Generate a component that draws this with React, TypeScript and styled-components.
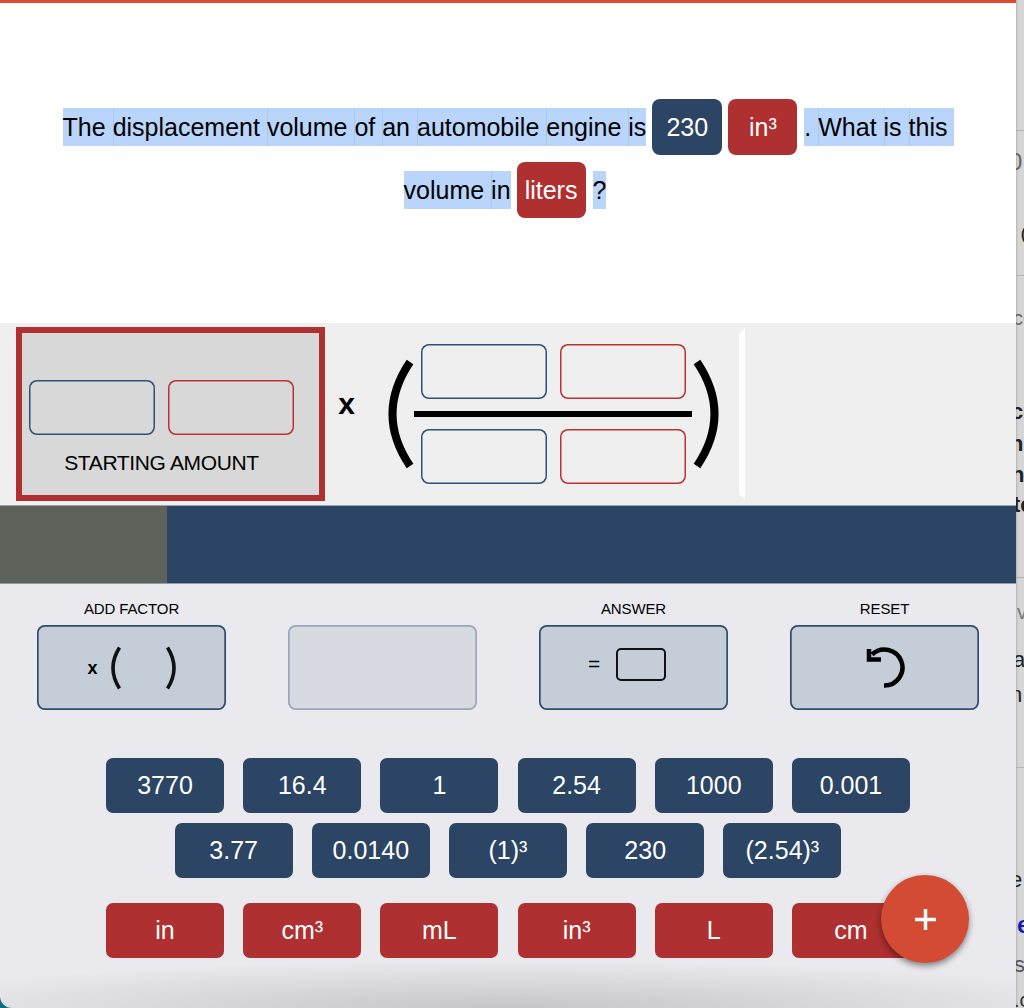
import React from "react";
import styled, { createGlobalStyle } from "styled-components";

const Global = createGlobalStyle`
  html, body { margin: 0; padding: 0; height: 1008px; overflow: hidden; background: #d6d6d6; }
  * { box-sizing: border-box; }
  body { font-family: "Liberation Sans", Arial, sans-serif; color: #000; }
`;

const NAVY = "#2c4564";
const RED = "#ae3030";

const Page = styled.div`
  display: flex;
  width: 1024px;
  height: 1008px;
  overflow: hidden;
`;
const Main = styled.main`
  width: 1016px;
  height: 1008px;
  display: flex;
  flex-direction: column;
  background: #0e6a82;
`;
const TopBar = styled.div`
  height: 3px;
  background: #dd4a30;
  flex: none;
`;
const Question = styled.section`
  height: 320px;
  flex: none;
  background: #fff;
  padding-top: 96px;
  display: flex;
  flex-direction: column;
  gap: 7px;
`;
const QLine = styled.div<{ $left?: number; $right?: number }>`
  display: flex;
  justify-content: center;
  align-items: center;
  height: 56px;
  font-size: 25px;
  padding: 0 ${(p) => p.$right ?? 0}px 0 ${(p) => p.$left ?? 0}px;
`;
const Words = styled.span`
  display: flex;
  height: 38px;
  line-height: 38px;
  background: #b9d5fb;
  white-space: pre;
`;
const Word = styled.span`
  box-shadow: inset 1px 0 0 #a5c8f8;
  &:first-child { box-shadow: none; }
`;
const Chip = styled.span<{ $tone: string; $w: number; $before: number; $after: number }>`
  width: ${(p) => p.$w}px;
  height: 56px;
  margin: 0 ${(p) => p.$after}px 0 ${(p) => p.$before}px;
  border-radius: 8px;
  display: flex;
  align-items: center;
  justify-content: center;
  color: #fff;
  background: ${(p) => p.$tone};
`;

const Workspace = styled.section`
  height: 182px;
  flex: none;
  background: #efefef;
  padding: 4px 0 0 16px;
  display: flex;
  align-items: flex-start;
`;
const StartBox = styled.div`
  width: 309px;
  height: 174px;
  border: 6px solid ${RED};
  background: #d8d8d8;
  padding: 47px 0 0 7px;
  flex: none;
`;
const SlotPair = styled.div`
  display: flex;
  gap: 13px;
`;
const Slot = styled.div<{ $tone: string }>`
  width: 126px;
  height: 55px;
  box-shadow: inset 0 0 0 1.5px ${(p) => p.$tone};
  border-radius: 8px;
`;
const StartLabel = styled.div`
  width: 265px;
  margin-top: 17px;
  text-align: center;
  font-size: 21px;
  line-height: 22px;
  letter-spacing: -0.35px;
`;
const Times = styled.div`
  margin: 59px 33px 0 13px;
  width: 17px;
  font-size: 30px;
  font-weight: 700;
  line-height: 36px;
  text-align: center;
`;
const FactorGroup = styled.div`
  display: flex;
  align-items: center;
  margin-top: 17px;
  flex: none;
`;
const Fraction = styled.div`
  width: 278px;
  display: flex;
  flex-direction: column;
  align-items: center;
  gap: 12px;
`;
const FractionBar = styled.div`
  width: 100%;
  height: 6px;
  background: #000;
`;
const Divider = styled.div`
  width: 6px;
  height: 172px;
  margin: 1px 0 0 20px;
  background: #fff;
  clip-path: polygon(0 6px, 100% 0, 100% 100%, 0 calc(100% - 6px));
`;

const Progress = styled.div`
  height: 79px;
  flex: none;
  background: ${NAVY};
  box-shadow: inset 0 1px 0 #9aa3ad, inset 0 -1px 0 #8e9bab;
`;
const ProgressFill = styled.div`
  height: 100%;
  background: #5d635b;
  box-shadow: inset 0 1px 0 #9aa3ad, inset 0 -1px 0 #8e9bab;
`;

const Panel = styled.section`
  flex: 1;
  background:
    radial-gradient(ellipse 640px 48px at 50% 100%, rgba(120, 120, 125, 0.32), rgba(120, 120, 125, 0) 100%),
    #e9e9ee;
  border-bottom-left-radius: 12px;
  padding-top: 15px;
  position: relative;
`;
const Actions = styled.div`
  display: grid;
  grid-template-columns: repeat(4, 189px);
  column-gap: 62px;
  padding-left: 37px;
`;
const Action = styled.div`
  display: flex;
  flex-direction: column;
  align-items: center;
  gap: 10px;
`;
const ActionLabel = styled.div`
  height: 16px;
  line-height: 19px;
  font-size: 15px;
  letter-spacing: -0.12px;
`;
const ActionButton = styled.button<{ $disabled?: boolean }>`
  width: 100%;
  height: 85px;
  margin-top: ${(p) => (p.$disabled ? "26px" : "0")};
  padding: 0;
  border-radius: 8px;
  border: none;
  box-shadow: inset 0 0 0 1.7px ${(p) => (p.$disabled ? "#9aa7ba" : "#2f4d70")};
  background: ${(p) => (p.$disabled ? "#d7dbe1" : "#c5ced8")};
  display: flex;
  align-items: center;
  justify-content: center;
  font-family: inherit;
  color: #000;
`;
const AddFactorMark = styled.span`
  width: 10px;
  font-size: 18px;
  font-weight: 700;
  line-height: 18px;
  margin-right: 13px;
  text-align: center;
`;
const AddFactorGap = styled.span`
  width: 45px;
`;
const AnswerGroup = styled.span`
  display: flex;
  align-items: center;
  gap: 16px;
  padding: 0 13px 6px 0;
`;
const Equals = styled.span`
  font-size: 21px;
  line-height: 21px;
  width: 12px;
  text-align: center;
  margin-bottom: 2px;
`;
const AnswerBox = styled.span`
  width: 50px;
  height: 33px;
  border: 2px solid #111;
  border-radius: 5px;
`;

const Tokens = styled.div`
  display: flex;
  flex-direction: column;
  align-items: center;
  margin-top: 48px;
`;
const TokenRow = styled.div<{ $top?: number }>`
  display: flex;
  gap: 19.2px;
  margin-top: ${(p) => p.$top ?? 0}px;
`;
const Token = styled.button<{ $tone: string }>`
  width: 118px;
  height: 55px;
  padding: 0;
  border: none;
  border-radius: 7px;
  background: ${(p) => p.$tone};
  color: #fff;
  font-family: inherit;
  font-size: 25px;
`;
const Fab = styled.button`
  position: absolute;
  left: 881px;
  top: 291px;
  width: 88px;
  height: 88px;
  border: none;
  border-radius: 50%;
  background: #d34b33;
  box-shadow: 0 3px 6px rgba(0, 0, 0, 0.45);
  display: flex;
  align-items: center;
  justify-content: center;
  padding: 0;
`;

const BackStrip = styled.aside`
  width: 8px;
  height: 1008px;
  flex: none;
  background: #d6d6d6;
  box-shadow: inset 2px 0 2px -1px #b4b4b4;
  overflow: hidden;
`;
const BackRow = styled.div<{ $h: number; $rule?: boolean; $color?: string; $bold?: boolean; $size?: number }>`
  height: ${(p) => p.$h}px;
  line-height: ${(p) => p.$h}px;
  border-bottom: ${(p) => (p.$rule ? "1px solid #b2b2b2" : "none")};
  color: ${(p) => p.$color ?? "#222"};
  font-weight: ${(p) => (p.$bold ? 700 : 400)};
  font-size: ${(p) => p.$size ?? 20}px;
  white-space: nowrap;
  overflow: hidden;
`;
const BackText = styled.span<{ $shift?: number }>`
  display: inline-block;
  margin-left: ${(p) => p.$shift ?? 0}px;
`;

const BigParen = ({ flip }: { flip?: boolean }) => (
  <svg width="26" height="110" viewBox="0 0 26 110" style={flip ? { transform: "scaleX(-1)", marginLeft: 1 } : undefined}>
    <path d="M22 3Q-13 55 22 107" fill="none" stroke="#000" strokeWidth="8" />
  </svg>
);
const SmallParen = ({ flip }: { flip?: boolean }) => (
  <svg width="10" height="44" viewBox="0 0 10 44" style={flip ? { transform: "scaleX(-1)" } : undefined}>
    <path d="M8.5 1.5Q-4.5 22 8.5 42.5" fill="none" stroke="#111" strokeWidth="3.6" />
  </svg>
);
const ResetIcon = () => (
  <svg width="42" height="44" viewBox="0 0 42 44">
    <path d="M8 8.5A18 18 0 1 1 20 39.5" fill="none" stroke="#000" strokeWidth="4.5" />
    <path d="M5 3V13.5H17" fill="none" stroke="#000" strokeWidth="4.5" />
  </svg>
);
const PlusIcon = () => (
  <svg width="21" height="21" viewBox="0 0 21 21">
    <path d="M10.5 0V21M0 10.5H21" stroke="#fff" strokeWidth="3.5" />
  </svg>
);

const line1 = ["The ", "displacement ", "volume ", "of ", "an ", "automobile ", "engine ", "is"];
const line1b = [". ", "What ", "is ", "this "];
const row1 = ["3770", "16.4", "1", "2.54", "1000", "0.001"];
const row2 = ["3.77", "0.0140", "(1)³", "230", "(2.54)³"];
const row3 = ["in", "cm³", "mL", "in³", "L", "cm"];

type Back = { h: number; t?: string; rule?: boolean; color?: string; bold?: boolean; shift?: number; size?: number };
const backRows: Back[] = [
  { h: 131, rule: true },
  { h: 62, t: "0", color: "#666", shift: -7, size: 24 },
  { h: 82, t: "(", color: "#222", shift: 5, bold: true, size: 14 },
  { h: 1, rule: true },
  { h: 84, t: "co", color: "#666", shift: -3 },
  { h: 36 },
  { h: 32, t: "ce", bold: true, shift: -5, size: 22 },
  { h: 32, t: "he", bold: true, shift: -6, size: 22 },
  { h: 30, t: "h", bold: true, shift: -5, size: 22 },
  { h: 30, t: "te", bold: true, shift: -3, size: 22 },
  { h: 58, rule: true },
  { h: 68, t: "v", color: "#777", shift: 1 },
  { h: 28, t: "ad", shift: -3, size: 22 },
  { h: 42, t: "n", shift: -6, size: 22 },
  { h: 52, rule: true },
  { h: 92 },
  { h: 40, t: "e", shift: -6, size: 22 },
  { h: 50, t: "e", color: "#1a1aa8", bold: true, shift: 1, size: 24 },
  { h: 30, t: "s", color: "#555", shift: -2, size: 22 },
  { h: 40, t: ".c", color: "#333", shift: -2 },
];

export default function App() {
  return (
    <Page>
      <Global />
      <Main>
        <TopBar />
        <Question>
          <QLine $left={1}>
            <Words>
              {line1.map((w, i) => (
                <Word key={i}>{w}</Word>
              ))}
            </Words>
            <Chip $tone={NAVY} $w={70} $before={6} $after={6}>230</Chip>
            <Chip $tone={RED} $w={69} $before={0} $after={7}>in³</Chip>
            <Words>
              {line1b.map((w, i) => (
                <Word key={i}>{w}</Word>
              ))}
            </Words>
          </QLine>
          <QLine $right={6}>
            <Words>
              <Word>volume </Word>
              <Word>in</Word>
            </Words>
            <Chip $tone={RED} $w={69} $before={6} $after={7}>liters</Chip>
            <Words>
              <Word>?</Word>
            </Words>
          </QLine>
        </Question>
        <Workspace>
          <StartBox>
            <SlotPair>
              <Slot $tone="#2f5078" />
              <Slot $tone="#bb3232" />
            </SlotPair>
            <StartLabel>STARTING AMOUNT</StartLabel>
          </StartBox>
          <Times>x</Times>
          <FactorGroup>
            <BigParen />
            <Fraction>
              <SlotPair>
                <Slot $tone="#2f5078" />
                <Slot $tone="#bb3232" />
              </SlotPair>
              <FractionBar />
              <SlotPair>
                <Slot $tone="#2f5078" />
                <Slot $tone="#bb3232" />
              </SlotPair>
            </Fraction>
            <BigParen flip />
          </FactorGroup>
          <Divider />
        </Workspace>
        <Progress>
          <ProgressFill style={{ width: 167 }} />
        </Progress>
        <Panel>
          <Actions>
            <Action>
              <ActionLabel>ADD FACTOR</ActionLabel>
              <ActionButton>
                <AddFactorMark>x</AddFactorMark>
                <SmallParen />
                <AddFactorGap />
                <SmallParen flip />
              </ActionButton>
            </Action>
            <Action>
              <ActionButton $disabled />
            </Action>
            <Action>
              <ActionLabel>ANSWER</ActionLabel>
              <ActionButton>
                <AnswerGroup>
                  <Equals>=</Equals>
                  <AnswerBox />
                </AnswerGroup>
              </ActionButton>
            </Action>
            <Action>
              <ActionLabel>RESET</ActionLabel>
              <ActionButton>
                <ResetIcon />
              </ActionButton>
            </Action>
          </Actions>
          <Tokens>
            <TokenRow>
              {row1.map((t) => (
                <Token key={t} $tone={NAVY}>{t}</Token>
              ))}
            </TokenRow>
            <TokenRow $top={10}>
              {row2.map((t) => (
                <Token key={t} $tone={NAVY}>{t}</Token>
              ))}
            </TokenRow>
            <TokenRow $top={25}>
              {row3.map((t) => (
                <Token key={t} $tone={RED}>{t}</Token>
              ))}
            </TokenRow>
          </Tokens>
          <Fab aria-label="add">
            <PlusIcon />
          </Fab>
        </Panel>
      </Main>
      <BackStrip>
        {backRows.map((r, i) => (
          <BackRow key={i} $h={r.h} $rule={r.rule} $color={r.color} $bold={r.bold} $size={r.size}>
            {r.t && <BackText $shift={r.shift}>{r.t}</BackText>}
          </BackRow>
        ))}
      </BackStrip>
    </Page>
  );
}
